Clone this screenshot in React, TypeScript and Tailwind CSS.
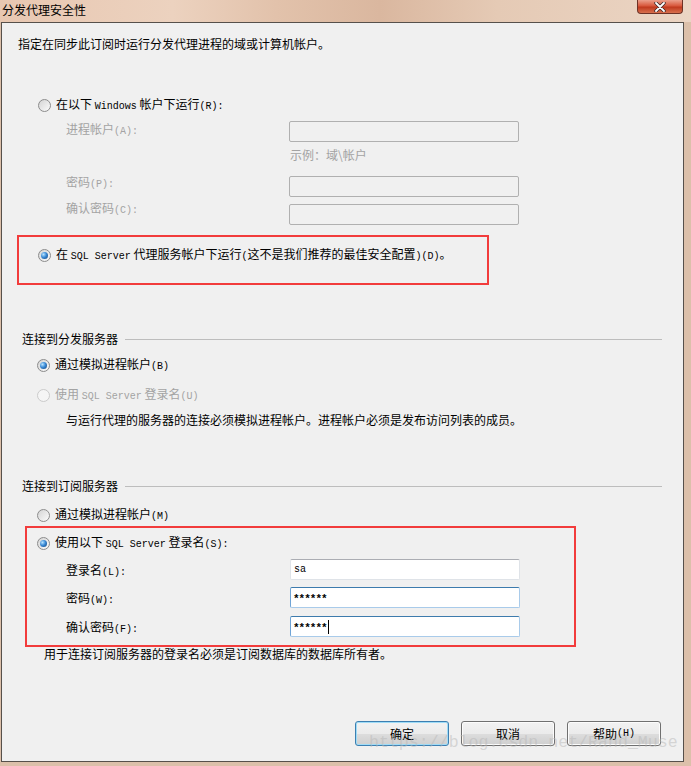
import React from "react";

const M = ({ children }: { children: React.ReactNode }) => (
  <span className="font-['Liberation_Mono',monospace] text-[10px]">{children}</span>
);

const Stars = () => (
  <span className="font-['Liberation_Mono',monospace] text-[11px] font-bold tracking-[-1px] leading-[14px] pt-[3px]">******</span>
);

function Radio({ checked, disabled }: { checked?: boolean; disabled?: boolean }) {
  return (
    <span
      className={
        disabled
          ? "inline-flex w-[13px] h-[13px] shrink-0 rounded-full border border-[#cbcbcb] bg-[#f5f5f5] items-center justify-center"
          : "inline-flex w-[13px] h-[13px] shrink-0 rounded-full border border-[#8c8c8c] bg-[linear-gradient(135deg,#d4d4d4,#fbfbfb)] items-center justify-center"
      }
    >
      {checked && (
        <span className="w-[7px] h-[7px] rounded-full bg-[radial-gradient(circle_at_35%_35%,#b8e4ff_0%,#3a8ad6_45%,#0f3f78_100%)]" />
      )}
    </span>
  );
}

function RadioRow({
  checked,
  disabled,
  children,
  className,
}: {
  checked?: boolean;
  disabled?: boolean;
  children: React.ReactNode;
  className: string;
}) {
  return (
    <div className={"flex items-center h-4 gap-[5px] " + className}>
      <Radio checked={checked} disabled={disabled} />
      <span className={disabled ? "text-[#a3a3a3] leading-4 whitespace-nowrap" : "text-black leading-4 whitespace-nowrap"}>
        {children}
      </span>
    </div>
  );
}

function SectionHeader({ children, className }: { children: React.ReactNode; className: string }) {
  return (
    <div className={"flex items-center h-4 ml-[20px] mr-[21px] " + className}>
      <span className="leading-4 whitespace-nowrap">{children}</span>
      <div className="flex-1 h-px bg-[#bdbdbd] ml-[7px]" />
    </div>
  );
}

function Button({ children, primary }: { children: React.ReactNode; primary?: boolean }) {
  return (
    <div
      className={
        primary
          ? "w-[94px] h-[25px] rounded-[3px] border border-[#3c7fb1] shadow-[inset_0_0_0_1px_#9fdcf7] bg-[linear-gradient(180deg,#f2f2f2_0%,#ebebeb_50%,#dddddd_51%,#cfcfcf_100%)] flex items-center justify-center leading-4"
          : "w-[94px] h-[25px] rounded-[3px] border border-[#707070] shadow-[inset_0_0_0_1px_#fcfcfc] bg-[linear-gradient(180deg,#f2f2f2_0%,#ebebeb_50%,#dddddd_51%,#cfcfcf_100%)] flex items-center justify-center leading-4"
      }
    >
      {children}
    </div>
  );
}

export default function App() {
  return (
    <div className="w-[691px] h-[766px] flex flex-col overflow-hidden bg-[#dcc0aa] font-['Noto_Sans_CJK_SC',sans-serif] text-[12px] text-black relative">
      {/* title bar */}
      <div className="h-[22px] flex-none flex items-start bg-[linear-gradient(90deg,#e8c7b1_0%,#ecd2bf_25%,#e2c2ab_40%,#dab79f_55%,#e5cab5_72%,#ebd5c4_100%)]">
        <span className="ml-[2px] mt-[2px] leading-4 text-[12px] text-black">分发代理安全性</span>
        <div className="ml-auto mr-[8px] w-[46px] h-[14px] rounded-b-[4px] border border-t-0 border-[#6e3226] bg-[linear-gradient(180deg,#eba08c_0%,#d8583c_45%,#c03a1e_55%,#d8704e_100%)] flex items-center justify-center">
          <svg width="12" height="10" viewBox="0 0 12 10">
            <path d="M2 1 L10 9 M10 1 L2 9" stroke="#3a2a2a" strokeWidth="3.4" strokeLinecap="round" />
            <path d="M2 1 L10 9 M10 1 L2 9" stroke="#ffffff" strokeWidth="1.8" strokeLinecap="round" />
          </svg>
        </div>
      </div>

      {/* frame + panel */}
      <div className="flex-1 flex pl-[1px] pr-[7px] pb-[4px]">
        <div className="flex-1 border border-[#56504b] bg-[#f0f0f0] flex flex-col">
          <div className="mt-[13px] ml-[16px] leading-4">指定在同步此订阅时运行分发代理进程的域或计算机帐户。</div>

          <RadioRow className="mt-[45px] ml-[36px]">
            在以下 <M>Windows</M> 帐户下运行<M>(R):</M>
          </RadioRow>

          <div className="mt-[8px] ml-[64px] flex items-start">
            <span className="w-[223px] leading-4 text-[#a3a3a3] mt-[0px]">
              进程帐户<M>(A):</M>
            </span>
            <div className="w-[230px] h-[21px] rounded-[2px] border border-[#b0b0b0] bg-[#f0f0f0]" />
          </div>
          <div className="mt-[5px] ml-[288px] leading-4 text-[#a3a3a3]">示例：域\帐户</div>

          <div className="mt-[13px] ml-[64px] flex items-start">
            <span className="w-[223px] leading-4 text-[#a3a3a3] -mt-[2px]">
              密码<M>(P):</M>
            </span>
            <div className="w-[230px] h-[21px] rounded-[2px] border border-[#b0b0b0] bg-[#f0f0f0]" />
          </div>
          <div className="mt-[7px] ml-[64px] flex items-start">
            <span className="w-[223px] leading-4 text-[#a3a3a3] -mt-[4px]">
              确认密码<M>(C):</M>
            </span>
            <div className="w-[230px] h-[21px] rounded-[2px] border border-[#b0b0b0] bg-[#f0f0f0]" />
          </div>

          <div className="mt-[10px] ml-[15px] w-[472px] h-[50px] border-2 border-[#f23c3c] pt-[10px]">
            <RadioRow checked className="ml-[19px]">
              在 <M>SQL Server</M> 代理服务帐户下运行<M>(</M>这不是我们推荐的最佳安全配置<M>)(D)</M>。
            </RadioRow>
          </div>

          <SectionHeader className="mt-[46px]">连接到分发服务器</SectionHeader>
          <RadioRow checked className="mt-[10px] ml-[35px]">
            通过模拟进程帐户<M>(B)</M>
          </RadioRow>
          <RadioRow disabled className="mt-[14px] ml-[35px]">
            使用 <M>SQL Server</M> 登录名<M>(U)</M>
          </RadioRow>
          <div className="mt-[9px] ml-[64px] leading-4">
            与运行代理的服务器的连接必须模拟进程帐户。进程帐户必须是发布访问列表的成员。
          </div>

          <SectionHeader className="mt-[50px]">连接到订阅服务器</SectionHeader>
          <RadioRow className="mt-[13px] ml-[35px]">
            通过模拟进程帐户<M>(M)</M>
          </RadioRow>

          <div className="mt-[3px] ml-[23px] w-[551px] h-[121px] border-2 border-[#f23c3c] pt-[7px]">
            <RadioRow checked className="ml-[10px]">
              使用以下 <M>SQL Server</M> 登录名<M>(S):</M>
            </RadioRow>
            <div className="mt-[8px] ml-[39px] flex items-start">
              <span className="w-[224px] leading-4 mt-[3px]">
                登录名<M>(L):</M>
              </span>
              <div className="w-[230px] h-[21px] rounded-[2px] border border-[#dfe3e8] border-t-[#abadb3] bg-white flex items-center pl-[3px]">
                <M>sa</M>
              </div>
            </div>
            <div className="mt-[6px] ml-[39px] flex items-start">
              <span className="w-[224px] leading-4 mt-[3px]">
                密码<M>(W):</M>
              </span>
              <div className="w-[230px] h-[21px] rounded-[2px] border border-[#a9cbea] border-t-[#3d7bad] border-l-[#6fa4d6] bg-white flex items-center pl-[2px]">
                <Stars />
              </div>
            </div>
            <div className="mt-[7px] ml-[39px] flex items-start">
              <span className="w-[224px] leading-4 mt-[3px]">
                确认密码<M>(F):</M>
              </span>
              <div className="w-[230px] h-[21px] rounded-[2px] border border-[#a9cbea] border-t-[#3d7bad] border-l-[#6fa4d6] bg-white flex items-center pl-[2px]">
                <Stars />
                <span className="w-px h-[14px] bg-black ml-[1px]" />
              </div>
            </div>
          </div>

          <div className="ml-[42px] leading-[14px] h-[14px]">用于连接订阅服务器的登录名必须是订阅数据库的数据库所有者。</div>

          <div className="mt-auto mb-[15px] mr-[22px] flex justify-end gap-[12px]">
            <Button primary>确定</Button>
            <Button>取消</Button>
            <Button>
              帮助<M>(H)</M>
            </Button>
          </div>
        </div>
      </div>

      {/* watermark overlay */}
      <div className="absolute left-[369px] top-[733px] font-['Liberation_Mono',monospace] text-[16.6px] leading-5 text-[#b8b8b8]/50 whitespace-nowrap pointer-events-none">
        https://blog.csdn.net/Rand_Muse
      </div>
    </div>
  );
}
